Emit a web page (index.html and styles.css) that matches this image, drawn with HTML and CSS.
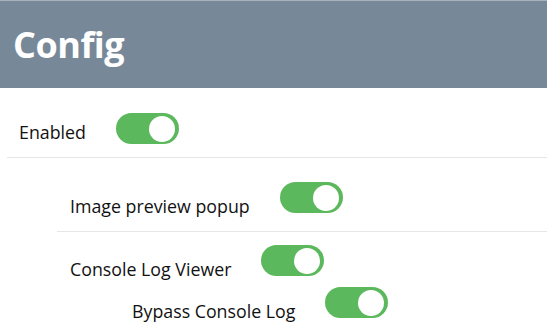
FILE: index.html
```html
<!DOCTYPE html>
<html lang="en">
<head>
  <meta charset="UTF-8" />
  <title>Config</title>
  <link rel="stylesheet" href="styles.css">
</head>
<body>
  <div class="header">
    <h1>Config</h1>
  </div>

  <div class="config">
    <div class="row top">
      <span class="label">Enabled</span>
      <label class="switch"><input type="checkbox" checked><span class="slider"></span></label>
    </div>

    <div class="sub">
      <div class="row preview">
        <span class="label">Image preview popup</span>
        <label class="switch"><input type="checkbox" checked><span class="slider"></span></label>
      </div>

      <div class="group">
        <div class="row console">
          <span class="label">Console Log Viewer</span>
          <label class="switch"><input type="checkbox" checked><span class="slider"></span></label>
        </div>
        <div class="row bypass">
          <span class="label">Bypass Console Log</span>
          <label class="switch"><input type="checkbox" checked><span class="slider"></span></label>
        </div>
      </div>
    </div>
  </div>
</body>
</html>
```

FILE: styles.css
```css
* {
  margin: 0;
  padding: 0;
  box-sizing: border-box;
}

body {
  font-family: "Open Sans", "Noto Sans", sans-serif;
  color: #111;
  background: #fff;
}

.header {
  height: 88px;
  background: #778899;
  border-top: 1px solid #a9b1ba;
  padding-left: 13px;
  display: flex;
  align-items: center;
}

.header h1 {
  color: #fff;
  font-size: 36px;
  font-weight: 700;
  letter-spacing: -0.5px;
}

.config {
  padding-left: 7px;
}

.row {
  display: flex;
  align-items: baseline;
  gap: 30px;
}

.label {
  font-size: 17.8px;
}

.top {
  align-items: center;
  padding: 25px 0 13px 12px;
  border-bottom: 1px solid #e6e6e6;
}

.top .label {
  margin-top: 6px;
}

.sub {
  padding-left: 50px;
}

.preview {
  padding: 24px 0 13px 13px;
  border-bottom: 1px solid #e6e6e6;
}

.group {
  padding: 13px 0 0 13px;
}

.bypass {
  margin-top: 6px;
  padding-left: 62px;
}

/* toggle */
.switch {
  position: relative;
  display: inline-block;
  width: 63px;
  height: 31px;
}

.switch input {
  display: none;
}

.slider {
  position: absolute;
  inset: 0;
  background: #ccc;
  border-radius: 16px;
  cursor: pointer;
}

.slider::before {
  content: "";
  position: absolute;
  width: 26px;
  height: 26px;
  left: 3px;
  top: 2.5px;
  background: #fff;
  border-radius: 50%;
}

input:checked + .slider {
  background: #5cb85c;
}

input:checked + .slider::before {
  left: 33px;
}
```
